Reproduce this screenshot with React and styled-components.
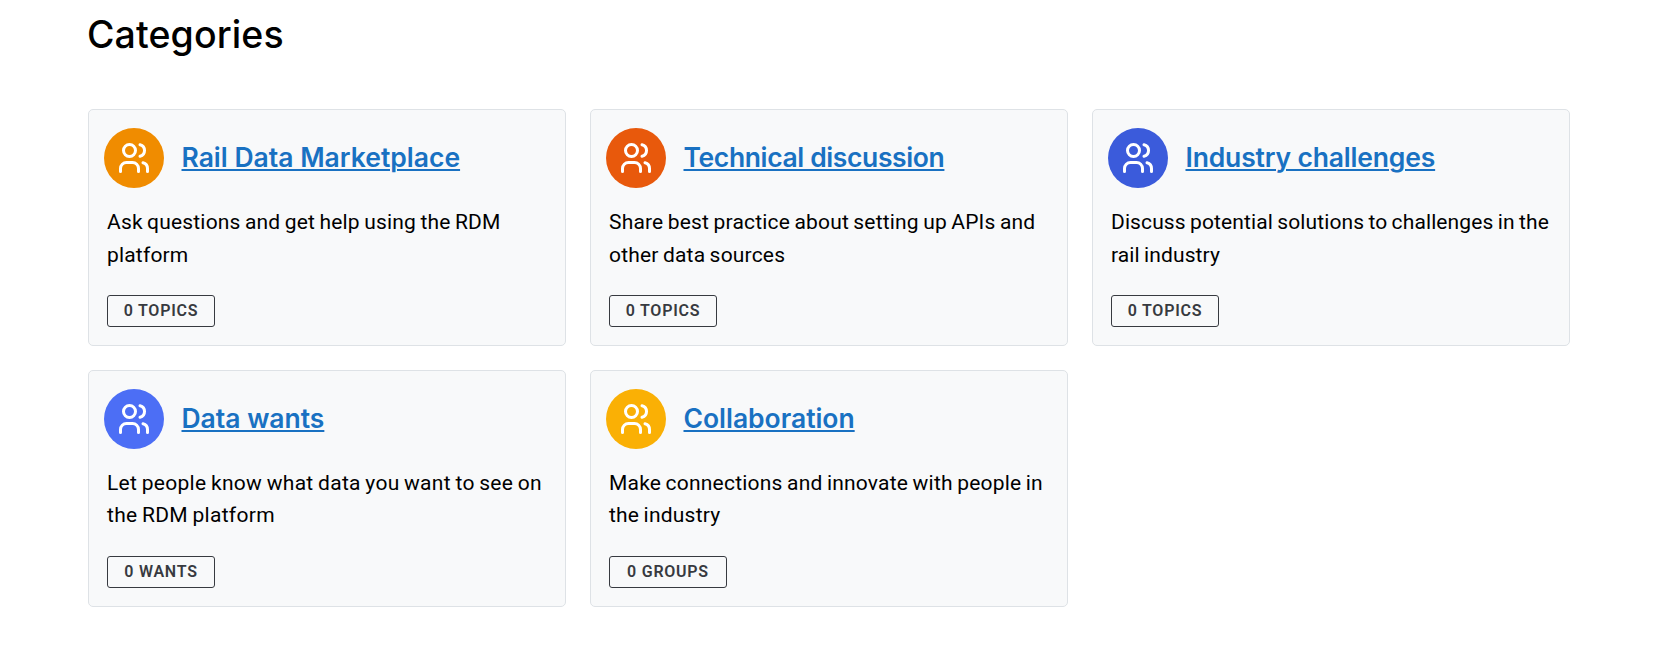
import React from 'react';
import styled, { createGlobalStyle } from 'styled-components';

const GlobalStyle = createGlobalStyle`
  body {
    margin: 0;
    background: #fff;
    color: #000;
    font-family: Roboto, 'Liberation Sans', sans-serif;
  }
`;

const Container = styled.main`
  padding: 9px 89px 0 87px;
`;

const Title = styled.h1`
  margin: 0 0 50px;
  font-family: Inter, Roboto, sans-serif;
  font-size: 37.5px;
  font-weight: 450;
  line-height: 51px;
  height: 50px;
  letter-spacing: 0.1px;
`;

const Grid = styled.div`
  display: grid;
  grid-template-columns: repeat(3, 478px);
  gap: 24px;
  margin-left: 1px;
`;

const Card = styled.article`
  box-sizing: border-box;
  height: 236.75px;
  padding: 18px;
  background: #f8f9fa;
  border: 1px solid #dee2e6;
  border-radius: 5px;
`;

const CardHeader = styled.div`
  display: flex;
  align-items: center;
  gap: 17.5px;
  margin-left: -3px;
`;

const Avatar = styled.div`
  display: flex;
  align-items: center;
  justify-content: center;
  width: 60px;
  height: 60px;
  border-radius: 50%;
  background: ${({ $color }) => $color};
`;

const CardLink = styled.a`
  padding-bottom: 1.5px;
  color: #1971c2;
  font-family: Inter, Roboto, sans-serif;
  font-size: 26.5px;
  font-weight: 600;
  line-height: 35px;
  letter-spacing: ${({ $tracking }) => $tracking}px;
  text-decoration: underline;
  text-decoration-thickness: 2px;
  text-underline-offset: 2px;
`;

const Description = styled.p`
  margin: 18px -10px 24px 0;
  font-size: 21px;
  line-height: 32.55px;
  letter-spacing: ${({ $tracking }) => $tracking}px;
  word-spacing: -1px;
  white-space: pre-line;
`;

const Badge = styled.span`
  display: flex;
  align-items: center;
  justify-content: center;
  box-sizing: border-box;
  width: ${({ $width }) => $width}px;
  height: 32px;
  padding-bottom: 1.5px;
  border: 1px solid #373a40;
  border-radius: 3px;
  color: #373a40;
  font-size: 16px;
  font-weight: 600;
  letter-spacing: 0.75px;
  text-transform: uppercase;
`;

const UsersIcon = () => (
  <svg
    width="36"
    height="36"
    viewBox="0 0 24 24"
    fill="none"
    stroke="#fff"
    strokeWidth="2"
    strokeLinecap="round"
    strokeLinejoin="round"
  >
    <circle cx="9" cy="7" r="4" />
    <path d="M3 21v-2a4 4 0 0 1 4 -4h4a4 4 0 0 1 4 4v2" />
    <path d="M16 3.13a4 4 0 0 1 0 7.75" />
    <path d="M21 21v-2a4 4 0 0 0 -3 -3.85" />
  </svg>
);

const categories = [
  {
    name: 'Rail Data Marketplace',
    nameTracking: 0,
    description: 'Ask questions and get help using the RDM\nplatform',
    textTracking: 0.18,
    count: '0 topics',
    color: '#f08c00',
    badgeWidth: 108,
  },
  {
    name: 'Technical discussion',
    nameTracking: -0.38,
    description: 'Share best practice about setting up APIs and\nother data sources',
    textTracking: 0.18,
    count: '0 topics',
    color: '#e8590c',
    badgeWidth: 108,
  },
  {
    name: 'Industry challenges',
    nameTracking: -0.17,
    description: 'Discuss potential solutions to challenges in the\nrail industry',
    textTracking: 0.11,
    count: '0 topics',
    color: '#3b5bdb',
    badgeWidth: 108,
  },
  {
    name: 'Data wants',
    nameTracking: -0.02,
    description: 'Let people know what data you want to see on\nthe RDM platform',
    textTracking: 0.3,
    count: '0 wants',
    color: '#4c6ef5',
    badgeWidth: 108,
  },
  {
    name: 'Collaboration',
    nameTracking: -0.03,
    description: 'Make connections and innovate with people in\nthe industry',
    textTracking: 0.21,
    count: '0 groups',
    color: '#fab005',
    badgeWidth: 118,
  },
];

function App() {
  return (
    <Container>
      <GlobalStyle />
      <Title>Categories</Title>
      <Grid>
        {categories.map((category) => (
          <Card key={category.name}>
            <CardHeader>
              <Avatar $color={category.color}>
                <UsersIcon />
              </Avatar>
              <CardLink href="#" $tracking={category.nameTracking}>
                {category.name}
              </CardLink>
            </CardHeader>
            <Description $tracking={category.textTracking}>{category.description}</Description>
            <Badge $width={category.badgeWidth}>{category.count}</Badge>
          </Card>
        ))}
      </Grid>
    </Container>
  );
}

export default App;
